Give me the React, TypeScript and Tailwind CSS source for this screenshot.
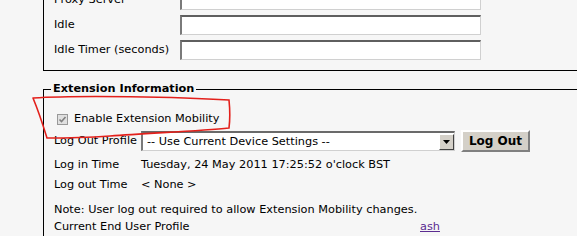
import React from 'react';

const Field: React.FC<{ label: string }> = ({ label }) => (
  <div className="flex items-center h-[20px]">
    <span className="w-[126px] whitespace-nowrap">{label}</span>
    <div className="w-[301px] h-[20px] bg-white border-t-2 border-l-2 border-t-[#5f5f5f] border-l-[#7a7a7a] border-r border-b border-r-[#d0d0d0] border-b-[#d0d0d0]" />
  </div>
);

export default function App() {
  return (
    <div className="relative w-[577px] h-[236px] overflow-hidden bg-[#f6f6f6] text-black text-[11.3px] leading-[14px] font-['DejaVu_Sans','Liberation_Sans',sans-serif]">
      {/* previous fieldset, cut off at the top */}
      <div className="-mt-[10px] ml-[43px] w-[600px] border-l border-b border-black pl-[10px] pb-[10px] flex flex-col gap-[5px]">
        <Field label="Proxy Server" />
        <Field label="Idle" />
        <Field label="Idle Timer (seconds)" />
      </div>

      <fieldset className="mt-[11px] ml-[43px] w-[600px] h-[200px] border-t border-l border-black pl-[10px]">
        <legend className="-ml-[3px] px-[2px] font-bold text-[11.3px] leading-[14px]">Extension Information</legend>

        <div className="pt-[12px] flex items-center h-[34px]">
          <span className="ml-[3px] w-[11px] h-[11px] border border-[#999999] bg-[#e0e0e0] flex items-center justify-center">
            <svg width="9" height="9" viewBox="0 0 9 9">
              <path d="M1.5 4.5 L3.5 6.5 L7.5 2" stroke="#808080" strokeWidth="1.6" fill="none" />
            </svg>
          </span>
          <span className="ml-[6px]">Enable Extension Mobility</span>
        </div>

        <div className="flex items-center h-[22px]">
          <span className="w-[87px] whitespace-nowrap">Log Out Profile</span>
          <div className="w-[314px] h-[20px] bg-white border-t-2 border-l-2 border-t-[#6a6a6a] border-l-[#7a7a7a] border-r border-b border-r-[#d0d0d0] border-b-[#d0d0d0] flex items-center justify-between">
            <span className="pl-[4px] whitespace-nowrap">-- Use Current Device Settings --</span>
            <span className="w-[15px] h-[16px] bg-[#d4d0c8] border border-t-white border-l-white border-r-[#404040] border-b-[#404040] flex items-center justify-center">
              <svg width="7" height="4" viewBox="0 0 7 4">
                <path d="M0 0 H7 L3.5 4 Z" fill="#000" />
              </svg>
            </span>
          </div>
          <button className="ml-[6px] w-[69px] h-[22px] bg-[#d4d0c8] border-2 border-t-white border-l-white border-r-[#808080] border-b-[#808080] font-bold text-[12px]">
            Log Out
          </button>
        </div>

        <div className="flex items-center h-[22px] mt-[2px]">
          <span className="w-[87px] whitespace-nowrap">Log in Time</span>
          <span className="whitespace-nowrap">Tuesday, 24 May 2011 17:25:52 o'clock BST</span>
        </div>
        <div className="flex items-center h-[18px]">
          <span className="w-[87px] whitespace-nowrap">Log out Time</span>
          <span>&lt; None &gt;</span>
        </div>

        <div className="flex items-center h-[18px] mt-[7px]">
          <span className="whitespace-nowrap">Note: User log out required to allow Extension Mobility changes.</span>
        </div>
        <div className="flex items-center h-[16px]">
          <span className="w-[366px] whitespace-nowrap">Current End User Profile</span>
          <a href="#" className="text-[#5b2c91] underline">ash</a>
        </div>
      </fieldset>

      {/* red hand-drawn annotation */}
      <svg className="absolute left-0 top-0 pointer-events-none" width="577" height="236" viewBox="0 0 577 236">
        <path
          d="M33 98 C 80 95, 180 97, 229 100 C 230 110, 230 120, 229 128 C 200 131, 150 133, 110 136 C 80 138, 58 138, 47 138 C 43 125, 38 110, 33 98"
          stroke="#e3201b"
          strokeWidth="1.6"
          fill="none"
          strokeLinecap="round"
        />
      </svg>
    </div>
  );
}
